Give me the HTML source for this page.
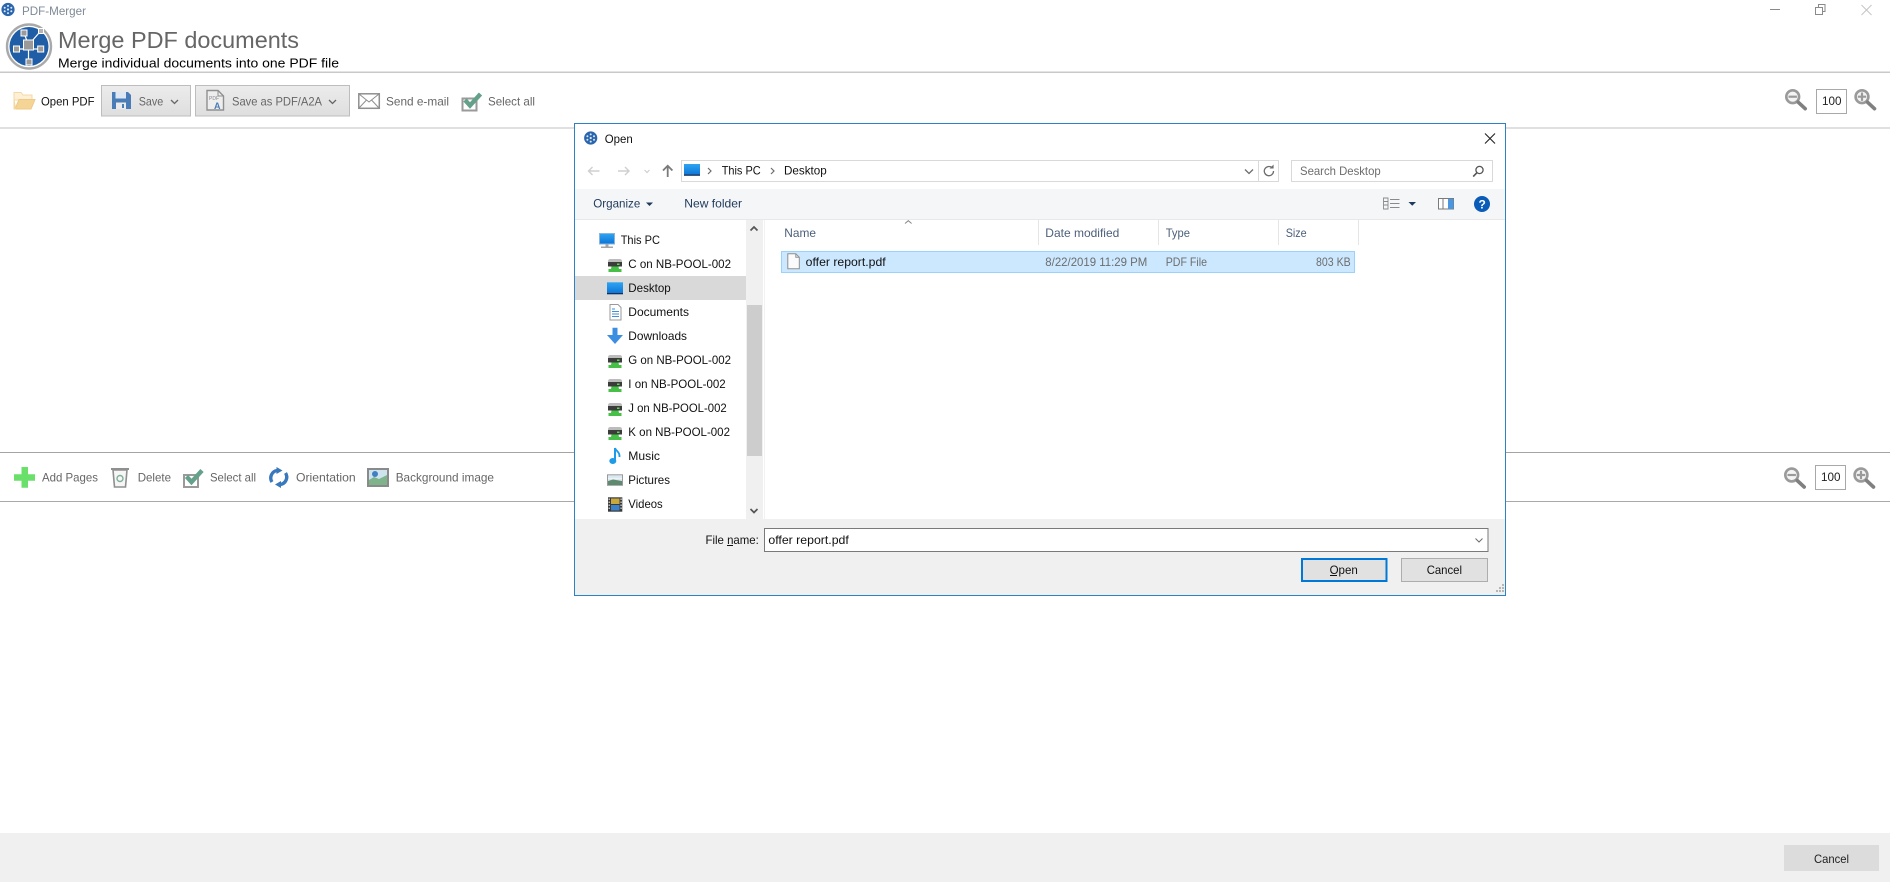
<!DOCTYPE html>
<html><head><meta charset="utf-8"><title>PDF-Merger</title>
<style>
html,body{margin:0;padding:0;background:#fff;width:1890px;height:882px;overflow:hidden}
svg{display:block;position:absolute;left:0;top:0}
text{font-family:"Liberation Sans",sans-serif;font-size:12px}
.g{fill:#666}
.k{fill:#111}
.h{fill:#4c607a}
.m{fill:#6d6d6d}
.o{fill:#1e395b}
</style></head><body>
<svg width="1890" height="882" viewBox="0 0 1890 882" xmlns="http://www.w3.org/2000/svg">
<defs>
<linearGradient id="btn" x1="0" y1="0" x2="0" y2="1"><stop offset="0" stop-color="#ececec"/><stop offset="1" stop-color="#dedede"/></linearGradient>
<linearGradient id="scr" x1="0" y1="0" x2="0" y2="1"><stop offset="0" stop-color="#2fa4f0"/><stop offset="1" stop-color="#0a74d8"/></linearGradient>
<g id="mag"><circle cx="0" cy="0" r="6.4" fill="#f4f4f4" stroke="#9a9a9a" stroke-width="2.6"/><path d="M5.5 5.5L12.5 12" stroke="#808080" stroke-width="3.6" stroke-linecap="round"/></g>
<g id="drive"><path d="M0.5 7V3.5Q0.5 1 3 1H12Q14.5 1 14.5 3.5V7Z" fill="#bcbcbc"/><rect x="0.5" y="4" width="14" height="4.5" fill="#3c3c3c"/><rect x="9.5" y="5.5" width="2.5" height="1.5" fill="#4fe04f"/><path d="M4 8.5H11L11.5 11H14V14H1V11H3.5Z" fill="#46c046"/></g>
<g id="chk"><rect x="1" y="7" width="14" height="12" fill="#fff" stroke="#9a9a9a" stroke-width="2"/><path d="M3.5 8.5L8.5 14L19 2.5" fill="none" stroke="#64a08a" stroke-width="4.4"/></g>
<g id="fan"><circle r="6.6" fill="#2a66ad"/><g fill="#dfe9f4"><circle cx="0" cy="0" r="1.1"/><circle cx="0" cy="-3.6" r="1"/><circle cx="0" cy="3.6" r="1"/><circle cx="-3.3" cy="-1.8" r="1"/><circle cx="3.3" cy="1.8" r="1"/><circle cx="3.3" cy="-1.8" r="1"/><circle cx="-3.3" cy="1.8" r="1"/></g></g>
</defs>

<rect width="1890" height="882" fill="#fff"/>

<!-- title bar -->
<use href="#fan" transform="translate(8,9.5)"/>
<text x="22" y="15" textLength="64" lengthAdjust="spacingAndGlyphs" style="fill:#7f8a95">PDF-Merger</text>
<path d="M1770 9.5H1780" stroke="#8a8a8a"/>
<path d="M1815.5 7.500h7v7h-7zM1818.500 7.500v-3h6.500v7h-2.500" fill="none" stroke="#8a8a8a"/>
<path d="M1861.500 5l10 10M1871.500 5l-10 10" stroke="#c4c4c4"/>

<!-- logo -->
<circle cx="29" cy="46.500" r="22" fill="#fff" stroke="#a9a9a9" stroke-width="2.400"/>
<circle cx="29" cy="46.500" r="19.500" fill="#1f5da6"/>
<path d="M24 33L28.500 45M16.500 49H40.700M28.500 45V62M28.500 45L40.700 31" stroke="#fff" stroke-width="1.200" fill="none"/>
<rect x="23.500" y="40" width="10" height="10" fill="#9a9a9a" stroke="#fff"/>
<rect x="21" y="30" width="6" height="6" fill="#9a9a9a" stroke="#fff"/>
<rect x="13.500" y="46" width="6" height="6" fill="#9a9a9a" stroke="#fff"/>
<rect x="37.700" y="46" width="6" height="6" fill="#9a9a9a" stroke="#fff"/>
<rect x="26" y="59" width="6" height="6" fill="#9a9a9a" stroke="#fff"/>
<rect x="38.500" y="28.500" width="5" height="5" fill="#b5b5b5" stroke="#fff"/>

<text x="58" y="48" style="font-size:23px;fill:#666" textLength="241" lengthAdjust="spacingAndGlyphs">Merge PDF documents</text>
<text x="58" y="67.500" style="font-size:13px;fill:#000" textLength="281" lengthAdjust="spacingAndGlyphs">Merge individual documents into one PDF file</text>

<rect x="0" y="71.500" width="1890" height="1.500" fill="#c9c9c9"/>
<rect x="0" y="127" width="1890" height="2" fill="#e0e0e0"/>

<!-- toolbar 1 -->
<path d="M14 92.500h7l2 2.500h9v5h-18z" fill="#fdf0d6" stroke="#f3d9a6"/>
<path d="M15 109l4-9.500h16l-4 9.500z" fill="#f5d596" stroke="#efc987"/>
<path d="M14 96v13h2" fill="#f5d596" stroke="#f3d9a6"/>
<text x="41" y="105.500" class="k" textLength="53.500" lengthAdjust="spacingAndGlyphs">Open PDF</text>

<rect x="101.500" y="85.500" width="89" height="30.500" fill="url(#btn)" stroke="#bdbdbd"/>
<path d="M112 92h16l3 3v14h-19z" fill="#4a7cb8"/>
<rect x="115.500" y="92" width="10.500" height="6.500" fill="#dfe8f2"/>
<rect x="116" y="102.500" width="10" height="6.500" fill="#eaeaea"/>
<rect x="122" y="104" width="2" height="4" fill="#4a7cb8"/>
<text x="138.700" y="105.500" class="g" textLength="24.500" lengthAdjust="spacingAndGlyphs">Save</text>
<path d="M171 100l3.500 3.500 3.500-3.500" fill="none" stroke="#666" stroke-width="1.300"/>

<rect x="195.500" y="85.500" width="154" height="30.500" fill="url(#btn)" stroke="#bdbdbd"/>
<path d="M207 90.500h11l5.500 5.500v14h-16.500z" fill="#eee" stroke="#8f8f8f" stroke-width="1.400"/>
<path d="M218 90.500v5.500h5.500" fill="none" stroke="#8f8f8f"/>
<text x="209" y="100" style="font-size:5px;fill:#888">PDF</text>
<text x="214" y="109" style="font-size:9px;fill:#4a7cb8;font-weight:bold">A</text>
<text x="232" y="105.500" class="g" textLength="90" lengthAdjust="spacingAndGlyphs">Save as PDF/A2A</text>
<path d="M329 100l3.500 3.500 3.500-3.500" fill="none" stroke="#666" stroke-width="1.300"/>

<rect x="358.800" y="93.800" width="20.500" height="14.500" fill="#fff" stroke="#8f8f8f" stroke-width="1.500"/>
<path d="M359 94l10 8 10-8M359 108l7.500-8M379 108l-7.500-8" fill="none" stroke="#8f8f8f"/>
<text x="386" y="105.500" class="g" textLength="63" lengthAdjust="spacingAndGlyphs">Send e-mail</text>
<use href="#chk" transform="translate(461.500,91.500)"/>
<text x="488" y="105.500" class="g" textLength="47" lengthAdjust="spacingAndGlyphs">Select all</text>

<!-- zoom 1 -->
<use href="#mag" transform="translate(1792.700,96.700)"/>
<path d="M1788.500 96.700h8.400" stroke="#9a9a9a" stroke-width="2.200"/>
<rect x="1816.500" y="89.500" width="30" height="24" fill="#fff" stroke="#a8a8a8"/>
<text x="1822" y="105" style="fill:#222" textLength="19.500" lengthAdjust="spacingAndGlyphs">100</text>
<use href="#mag" transform="translate(1862,96.700)"/>
<path d="M1857.800 96.700h8.400M1862 92.500v8.400" stroke="#9a9a9a" stroke-width="2.200"/>

<!-- second toolbar -->
<rect x="0" y="452" width="1890" height="1" fill="#a3a3a3"/>
<rect x="0" y="501" width="1890" height="1" fill="#a9a9a9"/>

<path d="M21.500 467h6.500v7.200h7v6.600h-7v7h-6.500v-7h-7.500v-6.600h7.500z" fill="#69e069"/>
<text x="42" y="481.500" class="g" textLength="56" lengthAdjust="spacingAndGlyphs">Add Pages</text>

<path d="M111 469h18" stroke="#8f8f8f" stroke-width="2"/>
<path d="M113 470l1.500 17h11l1.500-17z" fill="#f6f6f6" stroke="#8f8f8f" stroke-width="1.600"/>
<circle cx="120" cy="478.500" r="3" fill="none" stroke="#7fb09a" stroke-width="1.400"/>
<text x="137.700" y="481.500" class="g" textLength="33.300" lengthAdjust="spacingAndGlyphs">Delete</text>

<use href="#chk" transform="translate(183,468)"/>
<text x="210" y="481.500" class="g" textLength="46" lengthAdjust="spacingAndGlyphs">Select all</text>

<path d="M272 482a7.500 7.500 0 0 1 5-11.500" fill="none" stroke="#3a78bd" stroke-width="3.400"/>
<path d="M285.500 473a7.500 7.500 0 0 1-5 11.500" fill="none" stroke="#3a78bd" stroke-width="3.400"/>
<path d="M276.500 467l6 3.500-6 3.500zM281 481l-6 3.500 6 3.500z" fill="#3a78bd"/>
<text x="296" y="481.500" class="g" textLength="59.700" lengthAdjust="spacingAndGlyphs">Orientation</text>

<rect x="368" y="469" width="20" height="17" fill="#cfe3ee" stroke="#8a8a8a" stroke-width="2"/>
<path d="M369 485v-5l5-3 5 2 8-4v10z" fill="#7eb38c"/>
<circle cx="375" cy="474" r="3" fill="#3f7fc2"/>
<text x="395.700" y="481.500" class="g" textLength="98.300" lengthAdjust="spacingAndGlyphs">Background image</text>

<use href="#mag" transform="translate(1791.700,475)"/>
<path d="M1787.500 475h8.400" stroke="#9a9a9a" stroke-width="2.200"/>
<rect x="1815.500" y="465.500" width="30" height="24" fill="#fff" stroke="#a8a8a8"/>
<text x="1821" y="481" style="fill:#222" textLength="19.500" lengthAdjust="spacingAndGlyphs">100</text>
<use href="#mag" transform="translate(1861,475)"/>
<path d="M1856.800 475h8.400M1861 470.800v8.400" stroke="#9a9a9a" stroke-width="2.200"/>

<!-- bottom bar -->
<rect x="0" y="833" width="1890" height="49" fill="#f0f0f0"/>
<rect x="1784" y="845" width="95" height="26" fill="#dcdcdc"/>
<text x="1814" y="863" style="fill:#222" textLength="35" lengthAdjust="spacingAndGlyphs">Cancel</text>

<!-- DIALOG -->
<rect x="574.500" y="123.500" width="931" height="472" fill="#fff" stroke="#2c82c9"/>
<use href="#fan" transform="translate(590.700,138)"/>
<text x="604.700" y="143" class="k" textLength="28" lengthAdjust="spacingAndGlyphs">Open</text>
<path d="M1485 133.500l10 10M1495 133.500l-10 10" stroke="#222" stroke-width="1.100"/>

<!-- nav -->
<path d="M588.500 171h11M592.500 167l-4 4 4 4" fill="none" stroke="#cfcfcf" stroke-width="1.400"/>
<path d="M618 171h11M625 167l4 4-4 4" fill="none" stroke="#cfcfcf" stroke-width="1.400"/>
<path d="M644.500 170l2.500 2.500 2.500-2.500" fill="none" stroke="#cfcfcf" stroke-width="1.200"/>
<path d="M667.700 177v-11M663 170.500l4.700-4.700 4.700 4.700" fill="none" stroke="#7a7a7a" stroke-width="1.800"/>

<rect x="681.500" y="160.500" width="597" height="21" fill="#fff" stroke="#d9d9d9"/>
<rect x="684" y="164" width="16" height="11.500" fill="url(#scr)"/>
<rect x="684" y="174.500" width="16" height="1.300" fill="#1a2f55"/>
<path d="M708 168l3 3-3 3" fill="none" stroke="#6d6d6d" stroke-width="1.200"/>
<text x="721.700" y="174.500" class="k" textLength="39" lengthAdjust="spacingAndGlyphs">This PC</text>
<path d="M771 168l3 3-3 3" fill="none" stroke="#6d6d6d" stroke-width="1.200"/>
<text x="784" y="174.500" class="k" textLength="42.700" lengthAdjust="spacingAndGlyphs">Desktop</text>
<path d="M1245 169.500l4 4 4-4" fill="none" stroke="#6d6d6d" stroke-width="1.300"/>
<path d="M1258.500 161v20" stroke="#d9d9d9"/>
<path d="M1273.500 171a4.600 4.600 0 1 1-1.600-3.400" fill="none" stroke="#6d6d6d" stroke-width="1.300"/>
<path d="M1273.600 164.500v4h-4z" fill="#6d6d6d"/>

<rect x="1291.500" y="160.500" width="201" height="21" fill="#fff" stroke="#d9d9d9"/>
<text x="1300" y="175" class="m" textLength="80.700" lengthAdjust="spacingAndGlyphs">Search Desktop</text>
<circle cx="1479.500" cy="170" r="3.600" fill="none" stroke="#555" stroke-width="1.300"/>
<path d="M1476.800 172.800l-3.600 3.800" stroke="#555" stroke-width="1.600"/>

<!-- command band -->
<rect x="575" y="189" width="930" height="30" fill="#f5f6f7"/>
<rect x="575" y="219" width="930" height="1" fill="#e8e8e8"/>
<text x="593.300" y="207.700" class="o" textLength="47" lengthAdjust="spacingAndGlyphs">Organize</text>
<path d="M646 202.500h7l-3.500 3.500z" fill="#1e395b"/>
<text x="684.300" y="207.700" class="o" textLength="57.700" lengthAdjust="spacingAndGlyphs">New folder</text>
<path d="M1383.500 198h4.500v11h-4.500zM1383.500 201.500h4.500M1383.500 205h4.500" fill="none" stroke="#8a8a8a" stroke-width="0.900"/>
<path d="M1390 199.500h9.500M1390 203.500h9.500M1390 207.500h9.500" stroke="#8a8a8a" stroke-width="1"/>
<path d="M1408.500 202h7.500l-3.750 3.800z" fill="#1e395b"/>
<rect x="1438.500" y="198.500" width="15" height="10.500" fill="#fff" stroke="#7a7a7a"/>
<rect x="1448" y="199" width="5.500" height="10" fill="#4a96e0"/>
<path d="M1443 198.500v10.500" stroke="#7a7a7a"/>
<circle cx="1482" cy="204" r="8" fill="#0a5cb8"/>
<text x="1478.500" y="208.500" style="font-size:12px;font-weight:bold;fill:#fff">?</text>

<!-- left tree -->
<rect x="575" y="276" width="171" height="24" fill="#d9d9d9"/>
<rect x="746" y="220" width="17" height="299" fill="#f0f0f0"/>
<rect x="747" y="305" width="15" height="151" fill="#cdcdcd"/>
<path d="M750.500 230.500l3.500-3.500 3.500 3.500" fill="none" stroke="#555" stroke-width="1.700"/>
<path d="M750.500 509l3.500 3.500 3.500-3.500" fill="none" stroke="#555" stroke-width="1.700"/>
<rect x="764" y="220" width="1" height="299" fill="#f2f2f2"/>

<rect x="599.500" y="233.500" width="15" height="10.500" fill="url(#scr)" stroke="#8ab4d8"/>
<path d="M605.500 244.500v2h3v-2z" fill="#a5a5a5"/><rect x="601" y="246.500" width="12" height="1.500" fill="#a5a5a5"/>
<text x="620.700" y="244" class="k" textLength="39.300" lengthAdjust="spacingAndGlyphs">This PC</text>

<use href="#drive" transform="translate(607.500,258)"/>
<text x="628.300" y="268" class="k" textLength="102.700" lengthAdjust="spacingAndGlyphs">C on NB-POOL-002</text>

<rect x="607" y="282.300" width="16" height="11.700" fill="url(#scr)"/><rect x="607" y="293" width="16" height="1.300" fill="#1a2f55"/>
<text x="628.300" y="292" class="k" textLength="42.400" lengthAdjust="spacingAndGlyphs">Desktop</text>

<path d="M610 304.500h8l3 3v12.500h-11z" fill="#fff" stroke="#9a9a9a"/>
<path d="M612 309h3M612 311.500h7M612 314h7M612 316.500h7" stroke="#3f8fd8"/>
<text x="628.300" y="316" class="k" textLength="60.700" lengthAdjust="spacingAndGlyphs">Documents</text>

<path d="M612.500 327.700h5v7.300h5.500l-8 9-8-9h5.500z" fill="#3c8fe0"/>
<text x="628.300" y="340" class="k" textLength="58.700" lengthAdjust="spacingAndGlyphs">Downloads</text>

<use href="#drive" transform="translate(607.500,354)"/>
<text x="628.300" y="364" class="k" textLength="102.700" lengthAdjust="spacingAndGlyphs">G on NB-POOL-002</text>
<use href="#drive" transform="translate(607.500,378)"/>
<text x="628.300" y="388" class="k" textLength="97.400" lengthAdjust="spacingAndGlyphs">I on NB-POOL-002</text>
<use href="#drive" transform="translate(607.500,402)"/>
<text x="628.300" y="412" class="k" textLength="98.400" lengthAdjust="spacingAndGlyphs">J on NB-POOL-002</text>
<use href="#drive" transform="translate(607.500,426)"/>
<text x="628.300" y="436" class="k" textLength="101.700" lengthAdjust="spacingAndGlyphs">K on NB-POOL-002</text>

<path d="M615 448v12.500" stroke="#1e9ae8" stroke-width="2"/>
<ellipse cx="612.800" cy="461" rx="3.500" ry="3" fill="#1e9ae8"/>
<path d="M615 448c1 3 5 4 4.500 9" fill="none" stroke="#1e9ae8" stroke-width="1.800"/>
<text x="628.300" y="460" class="k" textLength="31.700" lengthAdjust="spacingAndGlyphs">Music</text>

<rect x="607.500" y="474.800" width="15" height="10.500" fill="#dbe9f2" stroke="#9a9a9a"/>
<path d="M608 481l5-1.500 9 1.500v4h-14z" fill="#5f8a70"/>
<path d="M608 478.500h14" stroke="#f2f2f2"/>
<text x="628.300" y="484" class="k" textLength="41.700" lengthAdjust="spacingAndGlyphs">Pictures</text>

<rect x="608" y="497.300" width="14.300" height="14.400" fill="#3a3a3a"/>
<path d="M609.200 498.500v12M621.100 498.500v12" stroke="#ddd" stroke-width="1.200" stroke-dasharray="1.500 1.500"/>
<rect x="611" y="498.500" width="8.500" height="5.500" fill="#c9a83c"/>
<rect x="611" y="505" width="8.500" height="5.500" fill="#3c82c8"/>
<text x="628.300" y="508" class="k" textLength="34.400" lengthAdjust="spacingAndGlyphs">Videos</text>

<!-- list header -->
<text x="784.300" y="237" class="h" textLength="31.700" lengthAdjust="spacingAndGlyphs">Name</text>
<path d="M905 223.500l3.300-2.800 3.300 2.800" fill="none" stroke="#8a8a8a"/>
<path d="M1038.500 220v25M1158.500 220v25M1278.500 220v25M1358.500 220v25" stroke="#e5e5e5"/>
<text x="1045.300" y="237" class="h" textLength="74" lengthAdjust="spacingAndGlyphs">Date modified</text>
<text x="1165.700" y="237" class="h" textLength="24.300" lengthAdjust="spacingAndGlyphs">Type</text>
<text x="1285.700" y="237" class="h" textLength="21" lengthAdjust="spacingAndGlyphs">Size</text>

<rect x="781.500" y="251.500" width="573" height="21" fill="#cce8ff" stroke="#99d1ff"/>
<path d="M787.800 253.800h8l3.500 3.500v11.400h-11.500z" fill="#fbfbfb" stroke="#8f8f8f"/>
<path d="M795.800 253.800v3.500h3.500" fill="none" stroke="#8f8f8f"/>
<text x="805.700" y="266" class="k" textLength="80" lengthAdjust="spacingAndGlyphs">offer report.pdf</text>
<text x="1045.300" y="266" class="m" textLength="102" lengthAdjust="spacingAndGlyphs">8/22/2019 11:29 PM</text>
<text x="1165.700" y="266" class="m" textLength="41.300" lengthAdjust="spacingAndGlyphs">PDF File</text>
<text x="1316" y="266" class="m" textLength="34.700" lengthAdjust="spacingAndGlyphs">803 KB</text>

<!-- bottom panel -->
<rect x="575" y="519" width="930" height="76" fill="#f0f0f0"/>
<text x="705.500" y="544" class="k" textLength="53.300" lengthAdjust="spacingAndGlyphs">File name:</text>
<path d="M727 545.500h6" stroke="#111"/>
<rect x="764.500" y="528.500" width="723.500" height="23" fill="#fff" stroke="#7a7a7a"/>
<text x="768.400" y="544" class="k" textLength="80.400" lengthAdjust="spacingAndGlyphs">offer report.pdf</text>
<path d="M1475.500 538.500l3.500 3.500 3.500-3.500" fill="none" stroke="#6d6d6d"/>

<rect x="1302" y="559" width="84.500" height="22" fill="#e1e1e1" stroke="#0078d7" stroke-width="2"/>
<text x="1329.600" y="574" class="k" textLength="28.200" lengthAdjust="spacingAndGlyphs">Open</text>
<path d="M1330 575.500h7" stroke="#111"/>
<rect x="1401.500" y="558.500" width="86" height="23" fill="#e1e1e1" stroke="#adadad"/>
<text x="1426.700" y="574" class="k" textLength="35.300" lengthAdjust="spacingAndGlyphs">Cancel</text>

<g fill="#b5b5b5"><rect x="1502" y="584" width="2" height="2"/><rect x="1499" y="587" width="2" height="2"/><rect x="1502" y="587" width="2" height="2"/><rect x="1496" y="590" width="2" height="2"/><rect x="1499" y="590" width="2" height="2"/><rect x="1502" y="590" width="2" height="2"/></g>
</svg>
</body></html>
